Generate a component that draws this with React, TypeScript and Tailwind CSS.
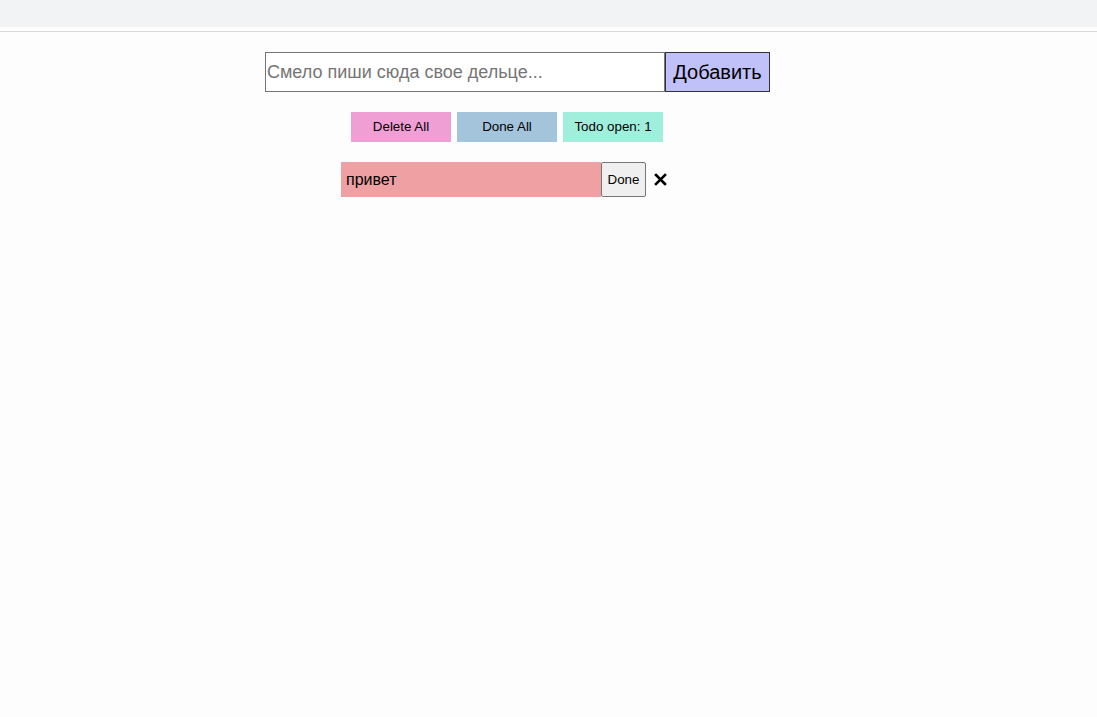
import React, { useState } from "react"

type Todo = { id: number; text: string; done: boolean }

export default function App() {
  const [value, setValue] = useState("")
  const [todos, setTodos] = useState<Todo[]>([{ id: 1, text: "привет", done: false }])

  const add = () => {
    if (!value.trim()) return
    setTodos([...todos, { id: Date.now(), text: value, done: false }])
    setValue("")
  }

  const open = todos.filter((t) => !t.done).length

  return (
    <div className="min-h-[717px] bg-[#fdfdfd] font-['Liberation_Sans',Arial,sans-serif] text-black">
      {/* browser strip */}
      <div className="h-[27px] bg-[#f1f3f4]" />
      <div className="mt-[4px] h-px bg-[#dadada]" />

      <div className="pl-[265px] pt-[20px] flex">
        <input
          value={value}
          onChange={(e) => setValue(e.target.value)}
          placeholder="Смело пиши сюда свое дельце..."
          className="w-[400px] h-[40px] border border-[#767676] bg-white px-px text-[18px] placeholder:text-[#757575] outline-none"
        />
        <button
          onClick={add}
          className="w-[105px] h-[40px] border border-[#333] bg-[#c1c1f9] text-[20px] leading-none"
        >
          Добавить
        </button>
      </div>

      <div className="pl-[351px] pt-[20px] flex gap-[6px]">
        <button onClick={() => setTodos([])} className="w-[100px] h-[30px] bg-[#f09fd4] text-[13.33px]">
          Delete All
        </button>
        <button
          onClick={() => setTodos(todos.map((t) => ({ ...t, done: true })))}
          className="w-[100px] h-[30px] bg-[#a3c4db] text-[13.33px]"
        >
          Done All
        </button>
        <div className="w-[100px] h-[30px] bg-[#a0eedc] text-[13.33px] flex items-center justify-center">
          Todo open: {open}
        </div>
      </div>

      <div className="pl-[341px] pt-[20px] flex flex-col gap-2">
        {todos.map((t) => (
          <div key={t.id} className="flex items-center h-[35px]">
            <div
              className={`w-[260px] h-[35px] flex items-center pl-[5px] text-[16px] ${
                t.done ? "bg-[#a0eedc] line-through" : "bg-[#efa0a3]"
              }`}
            >
              {t.text}
            </div>
            <button
              onClick={() => setTodos(todos.map((x) => (x.id === t.id ? { ...x, done: !x.done } : x)))}
              className="w-[45px] h-[35px] border border-[#767676] rounded-[2px] bg-[#efefef] text-[13.33px]"
            >
              Done
            </button>
            <button
              onClick={() => setTodos(todos.filter((x) => x.id !== t.id))}
              className="ml-[7px] w-[14px] h-[14px] flex items-center justify-center"
            >
              <svg width="13" height="13" viewBox="0 0 13 13">
                <path d="M2 2 L11 11 M11 2 L2 11" stroke="#000" strokeWidth="2.6" strokeLinecap="square" />
              </svg>
            </button>
          </div>
        ))}
      </div>
    </div>
  )
}
